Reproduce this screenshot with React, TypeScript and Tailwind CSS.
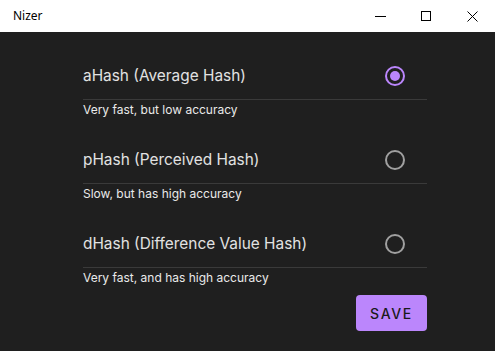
import { useState } from 'react'

const OPTIONS = [
  { id: 'ahash', title: 'aHash (Average Hash)', desc: 'Very fast, but low accuracy' },
  { id: 'phash', title: 'pHash (Perceived Hash)', desc: 'Slow, but has high accuracy' },
  { id: 'dhash', title: 'dHash (Difference Value Hash)', desc: 'Very fast, and has high accuracy' },
]

export default function App() {
  const [selected, setSelected] = useState('ahash')

  return (
    <div className="w-[495px] h-[351px] flex flex-col bg-[#1f1f1f] font-['Inter',sans-serif] overflow-hidden">
      {/* Title bar */}
      <div className="h-8 bg-white flex items-center justify-between shrink-0">
        <span className="pl-[13px] text-[12px] text-black font-['Noto_Sans',sans-serif]">Nizer</span>
        <div className="flex h-full">
          <div className="w-[46px] flex items-center justify-center">
            <div className="w-[11px] h-px bg-black" />
          </div>
          <div className="w-[46px] flex items-center justify-center">
            <div className="w-[10px] h-[10px] border border-black" />
          </div>
          <div className="w-[46px] flex items-center justify-center">
            <svg width="11" height="11" viewBox="0 0 11 11">
              <path d="M0.5 0.5L10.5 10.5M10.5 0.5L0.5 10.5" stroke="#000" strokeWidth="1" />
            </svg>
          </div>
        </div>
      </div>

      {/* Content */}
      <div className="ml-[83px] w-[344px] pt-5 flex flex-col">
        {OPTIONS.map((opt, i) => (
          <div key={opt.id} className={`flex flex-col ${i < OPTIONS.length - 1 ? 'mb-[18px]' : 'mb-[9px]'}`}>
            <button
              onClick={() => setSelected(opt.id)}
              className="h-12 flex items-center justify-between border-b border-[#3a3a3a] text-left"
            >
              <span className="text-[15.4px] text-[#e2e2e2]">{opt.title}</span>
              <span
                className={`mr-[22px] w-5 h-5 rounded-full border-2 flex items-center justify-center ${
                  selected === opt.id ? 'border-[#bb86fc]' : 'border-[#a0a0a0]'
                }`}
              >
                {selected === opt.id && <span className="w-[10px] h-[10px] rounded-full bg-[#bb86fc]" />}
              </span>
            </button>
            <p className="pt-[2px] text-[12px] leading-4 text-[#eaeaea]">{opt.desc}</p>
          </div>
        ))}
        <div className="flex justify-end">
          <button className="w-[71px] h-9 rounded bg-[#bb86fc] text-[14px] font-medium tracking-[0.12em] text-[#1a1a1a]">
            SAVE
          </button>
        </div>
      </div>
    </div>
  )
}
